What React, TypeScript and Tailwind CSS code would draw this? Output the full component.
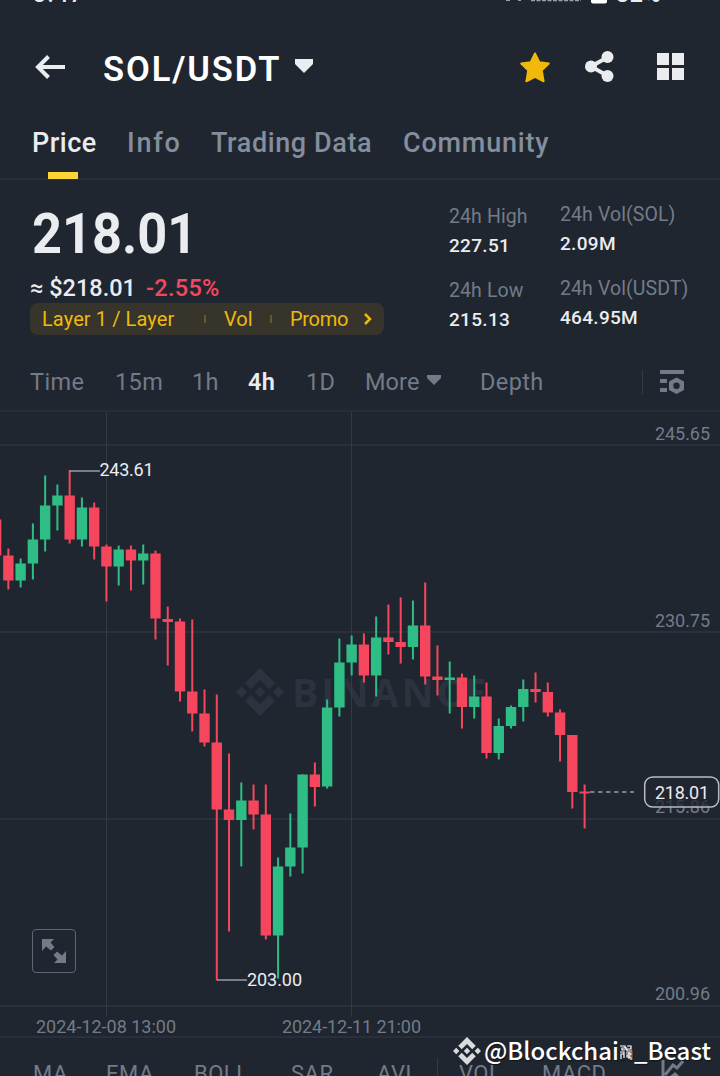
import React from 'react';

type Candle = {
  high: number;
  top: number;
  bottom: number;
  low: number;
  up?: boolean;
};

type Stat = {
  label: string;
  value: string;
};

// y positions inside the chart area, one candle every 12.26px
const candles: Candle[] = [
  { high: 109, top: 109, bottom: 145, low: 145 },
  { high: 138, top: 145, bottom: 170, low: 179 },
  { high: 148, top: 153, bottom: 170, low: 177, up: true },
  { high: 113, top: 129, bottom: 153, low: 169, up: true },
  { high: 65, top: 95, bottom: 129, low: 141, up: true },
  { high: 74, top: 85, bottom: 95, low: 120, up: true },
  { high: 60, top: 85, bottom: 129, low: 133 },
  { high: 87, top: 97, bottom: 129, low: 136, up: true },
  { high: 92, top: 97, bottom: 136, low: 149 },
  { high: 134, top: 136, bottom: 156, low: 191 },
  { high: 135, top: 139, bottom: 156, low: 175, up: true },
  { high: 135, top: 139, bottom: 150, low: 180 },
  { high: 134, top: 143, bottom: 150, low: 174, up: true },
  { high: 140, top: 143, bottom: 208, low: 229 },
  { high: 196, top: 208.5, bottom: 211.5, low: 255 },
  { high: 208, top: 211, bottom: 281, low: 291 },
  { high: 209, top: 281, bottom: 303, low: 321 },
  { high: 279, top: 303, bottom: 332, low: 336 },
  { high: 284, top: 332, bottom: 399, low: 570 },
  { high: 343, top: 399, bottom: 409.5, low: 521 },
  { high: 372, top: 390, bottom: 409.5, low: 456, up: true },
  { high: 374, top: 390, bottom: 404, low: 419 },
  { high: 374, top: 404, bottom: 525, low: 529 },
  { high: 447, top: 456, bottom: 525, low: 568, up: true },
  { high: 403, top: 437, bottom: 456, low: 466, up: true },
  { high: 364, top: 364, bottom: 437, low: 463, up: true },
  { high: 352, top: 364, bottom: 376.5, low: 396 },
  { high: 289, top: 297, bottom: 376, low: 378, up: true },
  { high: 228, top: 252, bottom: 297, low: 306, up: true },
  { high: 225, top: 234, bottom: 252, low: 265, up: true },
  { high: 223, top: 234, bottom: 265, low: 272 },
  { high: 206, top: 227, bottom: 265, low: 286, up: true },
  { high: 194, top: 227, bottom: 231.5, low: 244 },
  { high: 187, top: 231.5, bottom: 236.5, low: 253 },
  { high: 190, top: 215, bottom: 236.5, low: 249, up: true },
  { high: 172, top: 215, bottom: 266, low: 274 },
  { high: 235, top: 266, bottom: 269.5, low: 285 },
  { high: 251, top: 267, bottom: 269.5, low: 303, up: true },
  { high: 263, top: 267, bottom: 296.5, low: 318 },
  { high: 265, top: 286, bottom: 296.5, low: 308, up: true },
  { high: 272, top: 286, bottom: 342.5, low: 348 },
  { high: 308, top: 315.5, bottom: 342.5, low: 349, up: true },
  { high: 295, top: 296.5, bottom: 315.5, low: 318, up: true },
  { high: 269, top: 278.5, bottom: 296.5, low: 311, up: true },
  { high: 262, top: 278.5, bottom: 281.5, low: 292 },
  { high: 272, top: 281.5, bottom: 302, low: 306 },
  { high: 299, top: 302, bottom: 324.5, low: 351 },
  { high: 324.5, top: 324.5, bottom: 381.5, low: 398 },
  { high: 374, top: 381, bottom: 383, low: 418 },
];

const leftStats: Stat[] = [
  { label: '24h High', value: '227.51' },
  { label: '24h Low', value: '215.13' },
];

const rightStats: Stat[] = [
  { label: '24h Vol(SOL)', value: '2.09M' },
  { label: '24h Vol(USDT)', value: '464.95M' },
];

const StatusBar: React.FC = () => (
  <div className="relative h-[30px] overflow-hidden text-[#eaecef]">
    <div className="absolute left-[33px] top-[-16px] text-[23px] font-medium leading-[22px] tracking-[1.5px]">
      3:47
    </div>
    <div className="absolute left-[616px] top-[-16px] whitespace-nowrap text-[23px] font-bold leading-[22px] tracking-[0.5px]">
      32%
    </div>
    <svg className="absolute left-[500px] top-0" width="110" height="6">
      <path d="M6 0h4M18 0h3" stroke="#9a9fa8" strokeWidth="2" />
      <path d="M31 .3h50" stroke="#9a9fa8" strokeWidth="1.8" strokeDasharray="4 1.5" />
      <rect x="91" y="-6" width="16" height="9.5" rx="2" fill="#fff" />
    </svg>
  </div>
);

const Header: React.FC = () => (
  <header className="flex h-[74px] items-center pl-[35px] pr-9 text-[#eaecef]">
    <svg width="30" height="24" viewBox="0 0 30 24">
      <path d="M13.500 1.500L3 12l10.500 10.500M3 12h27" fill="none" stroke="currentColor" strokeWidth="4" />
    </svg>
    <h1 className="ml-[38px] mt-[3px] w-[178px] whitespace-nowrap text-[34.500px] font-semibold leading-10 tracking-[1.900px] text-white">
      SOL/USDT
    </h1>
    <svg className="ml-[14px] -mt-0.5" width="18" height="15" viewBox="0 0 18 15">
      <path d="M0 0h18v5L9 14 0 5z" fill="currentColor" />
    </svg>
    <svg className="ml-auto" width="30" height="31" viewBox="0 0 30 31">
      <path
        d="M15 1.500l4.300 8.800 9.500 1.300-7 6.700 1.800 11L15 24.800l-8.600 4.500 1.800-11-7-6.700 9.500-1.300z"
        fill="#f0b90b"
        stroke="#f0b90b"
        strokeWidth="2"
        strokeLinejoin="round"
      />
    </svg>
    <svg className="ml-[35px] -mt-0.5" width="29" height="31" viewBox="0 0 29 31">
      <path d="M23 6L6 15.500 23 25" fill="none" stroke="currentColor" strokeWidth="4" />
      <circle cx="22.500" cy="6" r="6" fill="currentColor" />
      <circle cx="6" cy="15.500" r="6" fill="currentColor" />
      <circle cx="22.500" cy="25" r="6" fill="currentColor" />
    </svg>
    <svg className="ml-[43px] -mt-px" width="27" height="27" viewBox="0 0 27 27">
      <path d="M0 0h12v12H0zM15 0h12v12H15zM0 15h12v12H0zM15 15h12v12H15z" fill="currentColor" />
    </svg>
  </header>
);

const Tabs: React.FC = () => (
  <nav className="flex h-[76px] items-start border-b-2 border-[#2a303b] pl-8 pt-[21px] text-[27px] font-medium leading-9 text-[#848e9c]">
    <div className="relative w-[64px] whitespace-nowrap tracking-[0.500px] text-[#eaecef]">
      Price
      <div className="absolute left-4 top-[47px] h-[7px] w-[30px] bg-[#fcd535]" />
    </div>
    <div className="ml-[31px] w-[53px] whitespace-nowrap tracking-[1.800px]">Info</div>
    <div className="ml-[31px] w-[160px] whitespace-nowrap tracking-[0.600px]">Trading Data</div>
    <div className="ml-[32px] whitespace-nowrap tracking-[0.800px]">Community</div>
  </nav>
);

const StatColumn: React.FC<{ stats: Stat[] }> = ({ stats }) => (
  <div className="flex flex-col gap-4">
    {stats.map((stat) => (
      <div key={stat.label} className="h-[58px] whitespace-nowrap">
        <div className="text-[19.500px] leading-[29px] tracking-[0.100px] text-[#737b88]">{stat.label}</div>
        <div className="text-[19px] font-medium leading-[30px] tracking-[0.300px] text-[#eaecef]">{stat.value}</div>
      </div>
    ))}
  </div>
);

const Summary: React.FC = () => (
  <section className="flex h-[172px] pl-[30px]">
    <div className="w-[419px] pt-[18px]">
      <div className="ml-0.5 w-[170px] origin-left scale-x-[0.935] text-[56px] font-bold leading-[72px] text-[#eaecef]">
        218.01
      </div>
      <div className="flex h-[33px] items-center gap-3 pt-1 text-[23.500px] font-medium">
        <span className="w-[104px] whitespace-nowrap text-[#eaecef]">≈ $218.01</span>
        <span className="tracking-[0.300px] text-[#f6465d]">-2.55%</span>
      </div>
      <div className="flex h-8 w-[354px] items-center rounded-lg bg-[#37342c] pl-3 text-[20px] text-[#f0b90b]">
        <span className="w-[133px] whitespace-nowrap tracking-[0.100px]">Layer 1 / Layer</span>
        <span className="ml-[29px] h-2 w-0.5 bg-[#66562a]" />
        <span className="ml-[18px] w-[28px]">Vol</span>
        <span className="ml-[18px] h-2 w-0.5 bg-[#66562a]" />
        <span className="ml-[18px] w-[58px] tracking-[-0.300px]">Promo</span>
        <svg className="ml-4" width="8" height="12" viewBox="0 0 8 12">
          <path d="M1 1l5 5-5 5" fill="none" stroke="currentColor" strokeWidth="2.500" />
        </svg>
      </div>
    </div>
    <div className="w-[111px] pt-[22px]">
      <StatColumn stats={leftStats} />
    </div>
    <div className="pt-[20px]">
      <StatColumn stats={rightStats} />
    </div>
  </section>
);

const Intervals: React.FC = () => (
  <nav className="flex h-[60px] items-center whitespace-nowrap border-b-2 border-[#272d37] pl-[30px] pr-9 pt-0.5 text-[23.500px] tracking-[0.400px] text-[#737b88]">
    <span className="mt-0.5 w-[85px]">Time</span>
    <span className="mt-0.5 w-[77px]">15m</span>
    <span className="mt-0.5 w-[56px]">1h</span>
    <span className="mt-0.5 w-[58px] font-semibold text-[#eaecef]">4h</span>
    <span className="mt-0.5 w-[59px]">1D</span>
    <span className="mt-0.5 w-[62px] tracking-[0.100px]">More</span>
    <svg width="14" height="11" viewBox="0 0 13 11" preserveAspectRatio="none" className="-mt-1">
      <path d="M0 0h13v3L6.500 10 0 3z" fill="currentColor" />
    </svg>
    <span className="ml-[39px] mt-0.5">Depth</span>
    <span className="ml-auto h-6 w-px bg-[#353b46]" />
    <svg className="ml-[17px]" width="24" height="24" viewBox="0 0 24 24" fill="currentColor">
      <path d="M0 0h24v4H0zM0 9h7v4H0zM0 18h7v4H0z" />
      <path fillRule="evenodd" d="M16.500 7.500l7.500 4v8.500l-7.500 4-7.500-4v-8.500zM16.500 12.500a3.200 3.200 0 100 6.400 3.200 3.200 0 000-6.400z" />
    </svg>
  </nav>
);

const BinanceMark: React.FC<{ className?: string }> = ({ className }) => (
  <svg className={className} viewBox="0 0 48 48" fill="currentColor">
    <path d="M24 0l15 15-6 6-9-9-9 9-6-6zM24 48L9 33l6-6 9 9 9-9 6 6z" />
    <path d="M24 18.500l5.500 5.500-5.500 5.500-5.500-5.500zM5.500 18.500L11 24l-5.500 5.500L0 24zM42.500 18.500L48 24l-5.500 5.500L37 24z" />
  </svg>
);

const Chart: React.FC = () => (
  <section className="relative h-[626px] overflow-hidden border-b-2 border-[#2a303b]">
    <div className="absolute left-[236px] top-[256px] flex items-center text-[#2d333e]">
      <BinanceMark className="size-12" />
      <span className="ml-[8px] font-['Open_Sans'] text-[39px] font-bold leading-[48px] tracking-[3px]">BINANCE</span>
    </div>
    <svg className="absolute left-0 top-0" width="720" height="624" viewBox="0 1.5 720 624">
      <g stroke="#2b313b" strokeWidth="2">
        <path d="M0 34.500h720M0 221.500h720M0 408.500h720M0 595.500h720" />
      </g>
      <path d="M106.500 0v606M351.500 0v606" stroke="#343a44" />
      {candles.map((c, i) => {
        const x = -3.9 + i * 12.26;
        return (
          <g key={i} fill={c.up ? '#2ebd85' : '#f6465d'}>
            <rect x={x - 1} y={c.high} width="2" height={c.low - c.high} />
            <rect x={x - 5.2} y={c.top} width="10.400" height={c.bottom - c.top} />
          </g>
        );
      })}
      <path d="M69 60.500h31M217 569.500h30" stroke="#969ba5" strokeWidth="1.500" />
      <path d="M590 381.500h44" stroke="#969ba5" strokeWidth="1.500" strokeDasharray="4.500 3.500" />
      <g fontFamily="Roboto" fontSize="18">
        <g fill="#eaecef">
          <text x="99.500" y="65" textLength="54">243.61</text>
          <text x="247" y="575" textLength="55">203.00</text>
        </g>
        <g fill="#737b88">
          <text x="655" y="29" textLength="55">245.65</text>
          <text x="655" y="216" textLength="55">230.75</text>
          <text x="655" y="589" textLength="55">200.96</text>
          <text x="655" y="402" textLength="55">215.86</text>
          <text x="36" y="622" textLength="140">2024-12-08 13:00</text>
          <text x="282" y="622" textLength="139">2024-12-11 21:00</text>
        </g>
        <rect x="644.700" y="366.500" width="74" height="30" rx="8" fill="#202630" fillOpacity=".75" stroke="#b7bbc2" strokeWidth="1.500" />
        <text x="655" y="388" textLength="54" fill="#eaecef">218.01</text>
      </g>
    </svg>
    <button className="absolute left-8 top-[517px] flex size-[44px] items-center justify-center rounded border-[1.500px] border-[#5e6673] text-[#737b88]">
      <svg width="24" height="24" viewBox="0 0 24 24" className="shrink-0" fill="currentColor">
        <path d="M0 0h12L8.500 3.500l4 4.500L9 11.500l-5-4L0 12zM24 24H12l3.500-3.500-4-4.500 3.500-3.500 5 4L24 12z" />
      </svg>
    </button>
  </section>
);

const Indicators: React.FC = () => (
  <div className="relative flex h-[38px] overflow-hidden whitespace-nowrap pl-[33px] pt-[20px] text-[22px] leading-[32px] tracking-[0.500px] text-[#737b88]">
    <span className="w-[73px]">MA</span>
    <span className="w-[88px]">EMA</span>
    <span className="w-[97px]">BOLL</span>
    <span className="w-[86px]">SAR</span>
    <span className="w-[60px]">AVL</span>
    <span className="h-6 w-px bg-[#353b46]" />
    <span className="ml-[21px] w-[83px]">VOL</span>
    <span>MACD</span>
    <svg className="absolute left-[660px] top-[22px]" width="24" height="24" viewBox="0 0 24 24">
      <path d="M3 0v24M5 15l8-10 4 3 6-7M9 19l6-5 7 7" fill="none" stroke="currentColor" strokeWidth="3" />
    </svg>
  </div>
);

const App: React.FC = () => {
  return (
    <div className="relative h-[1076px] w-[720px] overflow-hidden bg-[#202630] font-['Roboto',sans-serif]">
      <StatusBar />
      <Header />
      <Tabs />
      <Summary />
      <Intervals />
      <Chart />
      <Indicators />
      <div className="absolute left-[453px] top-[1037px] flex items-center whitespace-nowrap font-['Noto_Sans_CJK_SC',sans-serif] text-[24px] font-medium leading-[30px] text-white [text-shadow:1px_1px_1px_#0008]">
        <BinanceMark className="size-7 text-[#d9dadc]" />
        <span className="-mt-0.5 ml-[3px]">
          @Blockchai
          <span className="relative">
            n
            <svg className="absolute left-0 top-[13px]" width="14" height="15" viewBox="0 0 14 15">
              <path d="M1 0h12v15H1z" fill="#202630" />
              <path
                d="M1 1h5v2H3v2h3M8 1h4v3H8v2h5M1 7h4v2H2v5M5 9v4M7 8h5v2H8v2h4v3M10 7v7M7 2v3"
                fill="none"
                stroke="#fff"
                strokeWidth="1.200"
              />
            </svg>
          </span>
          _Beast
        </span>
      </div>
    </div>
  );
};

export default App;
